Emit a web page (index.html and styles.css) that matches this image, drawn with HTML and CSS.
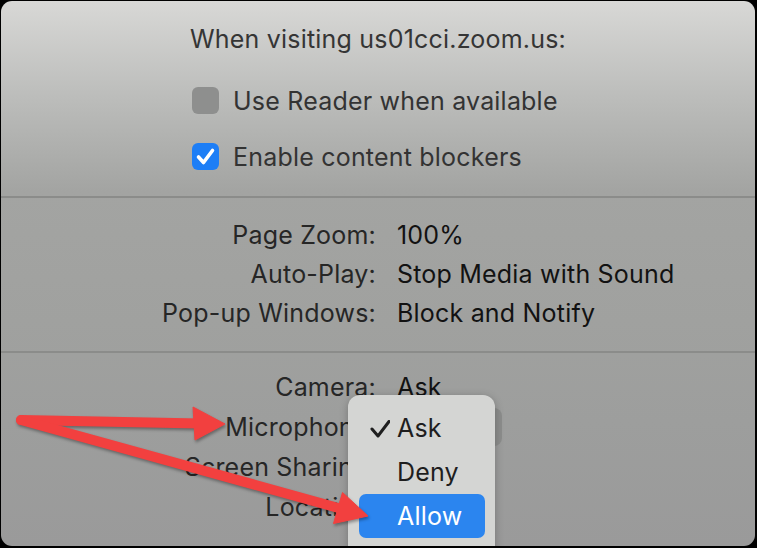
FILE: index.html
```html
<!DOCTYPE html>
<html lang="en">
<head>
    <meta charset="UTF-8">
    <meta name="viewport" content="width=device-width, initial-scale=1.0">
    <title>Website settings</title>
    <link rel="stylesheet" href="styles.css">
</head>
<body>

    <div class="panel">
        <div class="section top">
            <p class="title">When visiting us01cci.zoom.us:</p>
            <div class="checks">
                <label class="check-row">
                    <span class="box"></span>
                    Use Reader when available
                </label>
                <label class="check-row">
                    <span class="box on">
                        <svg viewBox="0 0 27 27" width="27" height="27"><polyline points="6.5,14 11.5,19.5 20.5,7.5" fill="none" stroke="#fff" stroke-width="3.6" stroke-linecap="round" stroke-linejoin="round"/></svg>
                    </span>
                    Enable content blockers
                </label>
            </div>
        </div>

        <div class="section middle">
            <div class="settings">
                <span class="label">Page Zoom:</span><span class="value">100%</span>
                <span class="label">Auto-Play:</span><span class="value">Stop Media with Sound</span>
                <span class="label">Pop-up Windows:</span><span class="value">Block and Notify</span>
            </div>
        </div>

        <div class="section bottom">
            <div class="settings perms">
                <span class="label">Camera:</span><span class="value">Ask</span>
                <span class="label">Microphone:</span><span class="value"><span class="popup-btn"></span></span>
                <span class="label">Screen Sharing:</span><span class="value"></span>
                <span class="label">Location:</span><span class="value"></span>
            </div>
        </div>

        <!-- open pop-up menu of the Microphone row -->
        <div class="menu">
            <div class="menu-item">
                <svg class="tick" viewBox="0 0 20 18" width="20" height="18"><polyline points="2,9 8,16 19,1.5" fill="none" stroke="#1f1f1f" stroke-width="3" stroke-linecap="round" stroke-linejoin="round"/></svg>
                Ask
            </div>
            <div class="menu-item">Deny</div>
            <div class="menu-item selected">Allow</div>
        </div>
    </div>

    <!-- annotation arrows drawn over the screenshot -->
    <svg class="arrows" viewBox="0 0 757 548" width="757" height="548">
        <g fill="#f2403f" stroke="#f2403f">
            <line x1="21" y1="420" x2="200" y2="423.5" stroke-width="10" stroke-linecap="round"/>
            <polygon points="193,407 225,424 195,440" stroke-width="1" stroke-linejoin="round"/>
            <line x1="21" y1="420" x2="342" y2="509" stroke-width="10" stroke-linecap="round"/>
            <polygon points="342.5,492.5 368,516 333.5,523.5" stroke-width="1" stroke-linejoin="round"/>
        </g>
    </svg>

</body>
</html>
```

FILE: styles.css
```css
html, body {
    margin: 0;
    height: 548px;
    overflow: hidden;
}
body {
    background-color: #000;
    font-family: Inter, "Noto Sans", sans-serif;
    font-size: 25px;
    letter-spacing: 0.2px;
    color: #2a2a2a;
    position: relative;
}
.panel {
    position: relative;
    margin: 1px 2px 0 1px;
    height: 545px;
    border-radius: 11px;
    overflow: hidden;
    background: linear-gradient(#d8d8d6 0px, #bcbdbb 95px, #a3a4a2 190px, #a0a19f 320px, #9d9e9d 420px, #9a9a9a 545px);
}
.section {
    border-bottom: 2px solid #8b8c8a;
}
.section.bottom {
    border-bottom: none;
}
.top {
    height: 176px;
    padding-top: 19px;
}
.title {
    margin: 0;
    line-height: 39px;
    text-align: center;
    color: #353535;
}
.checks {
    margin-top: 22px;
    padding-left: 191px;
    display: flex;
    flex-direction: column;
    gap: 17px;
}
.check-row {
    display: flex;
    align-items: center;
    gap: 14px;
    height: 39px;
    color: #333;
}
.box {
    width: 27px;
    height: 27px;
    border-radius: 6px;
    background-color: #8e8f8e;
    display: flex;
}
.box.on {
    background-color: #1d7ef6;
}
.middle {
    padding: 18px 0 18px;
}
.settings {
    display: grid;
    grid-template-columns: 375px 1fr;
    column-gap: 21px;
    line-height: 39px;
}
.label {
    text-align: right;
    color: #262626;
}
.value {
    color: #121212;
}
.bottom {
    padding-top: 14px;
}
.perms {
    grid-auto-rows: 40px;
    line-height: 40px;
}
.popup-btn {
    display: inline-block;
    vertical-align: top;
    margin: 1px 0 0 -12px;
    width: 117px;
    height: 38px;
    border-radius: 8px;
    background-color: #8c8d8c;
}
.menu {
    position: absolute;
    left: 347px;
    top: 394px;
    width: 147px;
    height: 170px;
    padding-top: 11px;
    box-sizing: border-box;
    border-radius: 12px;
    background-color: #d4d5d3;
    box-shadow: 0 2px 8px rgba(0, 0, 0, 0.25);
}
.menu-item {
    position: relative;
    margin: 0 10px 0 11px;
    padding-left: 38px;
    height: 44px;
    line-height: 44px;
    border-radius: 7px;
    color: #1e1e1e;
}
.menu-item.selected {
    background-color: #2b85ef;
    color: #fff;
}
.tick {
    position: absolute;
    left: 11px;
    top: 14px;
}
.arrows {
    position: absolute;
    left: 0;
    top: 0;
    pointer-events: none;
    filter: drop-shadow(1px 2px 1.5px rgba(0, 0, 0, 0.35));
}
```
